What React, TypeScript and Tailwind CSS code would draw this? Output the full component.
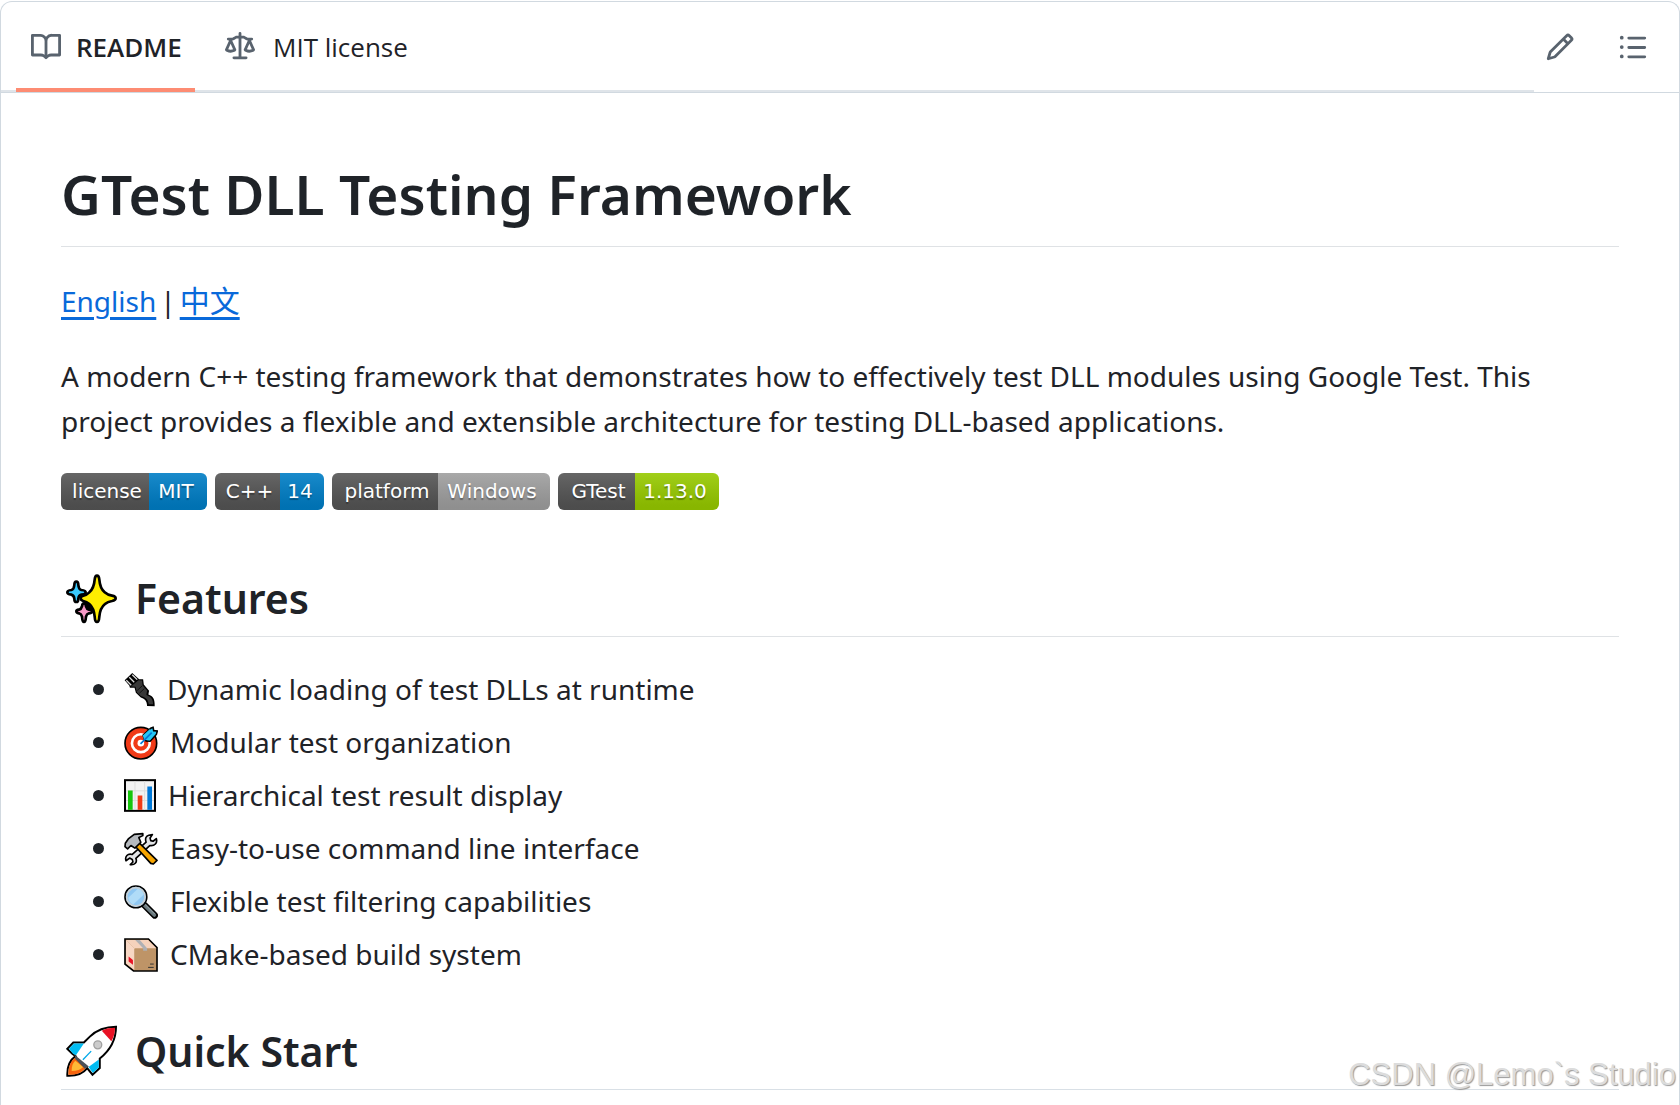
import React from "react";

const icons = {
  book: "M0 1.75A.75.75 0 0 1 .75 1h4.253c1.227 0 2.317.59 3 1.501A3.743 3.743 0 0 1 11.006 1h4.245a.75.75 0 0 1 .75.75v10.5a.75.75 0 0 1-.75.75h-4.507a2.25 2.25 0 0 0-1.591.659l-.622.621a.75.75 0 0 1-1.06 0l-.622-.621A2.25 2.25 0 0 0 5.258 13H.75a.75.75 0 0 1-.75-.75Zm7.251 10.324.004-5.073-.002-2.253A2.25 2.25 0 0 0 5.003 2.5H1.5v9h3.757a3.75 3.75 0 0 1 1.994.574ZM8.755 4.75l-.004 7.322a3.752 3.752 0 0 1 1.992-.572H14.5v-9h-3.495a2.25 2.25 0 0 0-2.25 2.25Z",
  law: "M8.75.75V2h.985c.304 0 .603.08.867.231l1.29.736c.038.022.08.033.124.033h2.234a.75.75 0 0 1 0 1.5h-.427l2.111 4.692a.75.75 0 0 1-.154.838l-.53-.53.529.531-.001.002-.002.002-.006.006-.006.005-.01.01-.045.04c-.21.176-.441.327-.686.45C14.556 10.78 13.88 11 13 11a4.498 4.498 0 0 1-2.023-.454 3.544 3.544 0 0 1-.686-.45l-.045-.04-.016-.015-.006-.006-.004-.004v-.001a.75.75 0 0 1-.154-.838L12.178 4.5h-.162c-.305 0-.604-.079-.868-.231l-1.29-.736a.245.245 0 0 0-.124-.033H8.75V13h2.5a.75.75 0 0 1 0 1.5h-6.5a.75.75 0 0 1 0-1.5h2.5V3.5h-.984a.245.245 0 0 0-.124.033l-1.289.737c-.265.15-.564.23-.869.23h-.162l2.112 4.692a.75.75 0 0 1-.154.838l-.53-.53.529.531-.001.002-.002.002-.006.006-.016.015-.045.04c-.21.176-.441.327-.686.45C4.556 10.78 3.88 11 3 11a4.498 4.498 0 0 1-2.023-.454 3.544 3.544 0 0 1-.686-.45l-.045-.04-.016-.015-.006-.006-.004-.004v-.001a.75.75 0 0 1-.154-.838L2.178 4.5H1.75a.75.75 0 0 1 0-1.5h2.234a.249.249 0 0 0 .125-.033l1.288-.737c.265-.15.564-.23.869-.23h.984V.75a.75.75 0 0 1 1.5 0Zm2.945 8.477c.285.135.718.273 1.305.273s1.02-.138 1.305-.273L13 6.327Zm-10 0c.285.135.718.273 1.305.273s1.02-.138 1.305-.273L3 6.327Z",
  pencil: "M11.013 1.427a1.75 1.75 0 0 1 2.474 0l1.086 1.086a1.75 1.75 0 0 1 0 2.474l-8.61 8.61c-.21.21-.47.364-.756.445l-3.251.93a.75.75 0 0 1-.927-.928l.929-3.25c.081-.286.235-.547.445-.758l8.61-8.61Zm.176 4.823L9.75 4.81l-6.286 6.287a.253.253 0 0 0-.064.108l-.558 1.953 1.953-.558a.253.253 0 0 0 .108-.064Zm1.238-3.763a.25.25 0 0 0-.354 0L10.811 3.75l1.439 1.44 1.263-1.263a.25.25 0 0 0 0-.354Z",
  list: "M5.75 2.5h8.5a.75.75 0 0 1 0 1.5h-8.5a.75.75 0 0 1 0-1.5Zm0 5h8.5a.75.75 0 0 1 0 1.5h-8.5a.75.75 0 0 1 0-1.5Zm0 5h8.5a.75.75 0 0 1 0 1.5h-8.5a.75.75 0 0 1 0-1.5ZM2 14a1 1 0 1 1 0-2 1 1 0 0 1 0 2Zm1-6a1 1 0 1 1-2 0 1 1 0 0 1 2 0ZM2 4a1 1 0 1 1 0-2 1 1 0 0 1 0 2Z",
};

const Icon = ({ name }: { name: keyof typeof icons }) => (
  <svg viewBox="0 0 16 16" className="size-[30px] fill-[#59636e]" aria-hidden="true">
    <path d={icons[name]} />
  </svg>
);

const Sparkles = () => (
  <svg viewBox="48 37 153 150" className="mb-0.5 w-[51px] h-[50px]" strokeLinejoin="round" stroke="#000" strokeWidth="8" aria-hidden="true">
    <path fill="#000" d="M104 118L128 118L132 152L112 144Z" />
    <path fill="#f999c8" d="M102 125q5 0 6 9q2 8 9 10q10 1 10 5q0 5-10 6q-7 2-9 10q-1 16-6 16q-5 0-6-16q-2-8-9-10q-8-1-8-6q0-4 8-5q7-2 9-10q1-9 6-9z" />
    <path fill="#3acbff" d="M79 60q6 0 6 10q1 13 9 15q13 1 13 7q0 6-13 7q-8 2-9 12q0 10-6 10q-6 0-6-10q-1-10-9-12q-12-1-12-7q0-6 12-7q8-2 9-15q0-10 6-10z" />
    <path fill="#ffed00" d="M141 42q6 0 7 12q2 26 16 38q9 8 22 10q11 2 11 8q0 6-11 8q-13 2-21 9q-15 12-17 38q-1 16-7 16q-6 0-7-16q-2-26-16-38q-8-7-18-9q-8-2-8-8q0-6 8-8q10-2 18-10q14-12 16-38q1-12 7-12z" />
  </svg>
);

const Plug = () => (
  <svg viewBox="132 36 94 104" className="w-[31px] h-[35px]" aria-hidden="true">
    <path d="M134 60L157 38L178 57L190 57L192 73L208 92L206 103C220 108 226 117 225 139L202 138C202 121 193 115 183 112L168 98L164 83L150 83L148 76Z" fill="#000" />
    <path d="M139 60L154 75M148 51L163 66M157 43L172 58" stroke="#ddd" strokeWidth="4" />
    <path d="M153 79L176 60L187 61L188 75L202 91L200 105C215 111 220 118 220 133L207 133C205 117 195 111 183 108L171 96L167 80Z" fill="#383838" />
    <path d="M172 91L187 77M179 99L194 85" stroke="#111" strokeWidth="3" />
  </svg>
);

const Target = () => (
  <svg viewBox="132 195 103 103" className="w-[34px] h-[34px]" aria-hidden="true">
    <circle cx="183" cy="247" r="48" fill="#f03a17" stroke="#000" strokeWidth="5" />
    <circle cx="183" cy="247" r="27" fill="none" stroke="#fff" strokeWidth="8" />
    <circle cx="183" cy="247" r="10" fill="#fff" />
    <path d="M194 235L190 223L213 202L220 199L222 209L233 210L230 220L211 241L199 240Z" fill="#26c6f5" stroke="#000" strokeWidth="5" />
    <path d="M193 237L189 224L211 204L217 214L229 218L210 239Z" fill="#26c6f5" />
    <path d="M182 249L216 215" stroke="#0078d7" strokeWidth="5" />
  </svg>
);

const BarChart = () => (
  <svg viewBox="132 353 96 98" className="w-8 h-[33px]" aria-hidden="true">
    <rect x="135" y="356" width="90" height="92" fill="#f2f2f2" stroke="#000" strokeWidth="6" />
    <path d="M138 388H222M138 417H222M165 359V445M194 359V445" stroke="#ddd" strokeWidth="3" />
    <path d="M151 387V445" stroke="#16c60c" strokeWidth="14" />
    <path d="M180 402V445" stroke="#f03a17" strokeWidth="14" />
    <path d="M209 375V445" stroke="#0078d7" strokeWidth="14" />
  </svg>
);

const Tools = () => (
  <svg viewBox="132 43 103 103" className="w-[34px] h-[34px]" strokeLinejoin="round" aria-hidden="true">
    <path d="M207 53L218 51L211 61L213 69L220 71L230 63C234 77 225 86 210 84L168 123C173 135 164 144 151 142L159 134L157 126L149 122L138 130C134 117 143 107 157 111L199 74C195 62 199 55 207 53Z" fill="#e3e5e8" stroke="#000" strokeWidth="5" />
    <path d="M166 86L178 76L232 129L221 140L213 138Z" fill="#f7a500" stroke="#000" strokeWidth="5" />
    <path d="M136 77L145 64L163 50L189 48L189 54L177 60L183 74L165 92L153 84L143 94L135 87Z" fill="#b5b9be" stroke="#000" strokeWidth="5" />
  </svg>
);

const Magnifier = () => (
  <svg viewBox="132 201 103 103" className="w-[34px] h-[34px]" aria-hidden="true">
    <path d="M194 262L225 293" stroke="#000" strokeWidth="20" strokeLinecap="round" />
    <path d="M194 262L224 292" stroke="#69797e" strokeWidth="11" strokeLinecap="round" />
    <path d="M196 260L225 289" stroke="#9aa6aa" strokeWidth="3" />
    <circle cx="168" cy="237" r="33" fill="#83beec" stroke="#000" strokeWidth="5" />
    <circle cx="168" cy="237" r="28" fill="#8fc7f2" stroke="#c8d0d5" strokeWidth="5" />
    <path d="M145 240L174 212C184 215 190 221 192 230L160 260C152 257 147 251 145 240Z" fill="#b0dcf8" />
  </svg>
);

const Box = () => (
  <svg viewBox="132 360 103 103" className="w-[34px] h-[34px]" aria-hidden="true">
    <path d="M135 363H206L232 389V460H161L135 439Z" fill="#be9467" stroke="#000" strokeWidth="5" />
    <path d="M138 366H205L230 391H163Z" fill="#f5d2bc" />
    <path d="M138 366L163 391V457L138 437Z" fill="#f7d7c4" />
    <path d="M166 366H180L202 391V399H190V391Z" fill="#aeb0b4" />
    <path d="M146 416L159 427V441L146 431Z" fill="#e81224" />
    <path d="M211 439H222M205 449H222" stroke="#333" strokeWidth="3" />
  </svg>
);

const Rocket = () => (
  <svg viewBox="47 43 154 155" className="mb-0.5 w-[51px] h-[52px]" aria-hidden="true">
    <path d="M198 47C172 47 140 56 119 77L101 95L69 95L51 114L66 129L76 136C57 149 50 170 51 195C77 196 99 188 111 172L127 192L149 172L149 143C179 119 198 89 198 47Z" fill="#fff" stroke="#000" strokeWidth="6" />
    <path d="M101 98L71 98L56 114L68 129L77 133Z" fill="#00bcf2" />
    <path d="M146 146L115 169L128 187L146 170Z" fill="#00bcf2" />
    <path d="M76 139C60 151 54 168 54 192C79 192 96 186 108 170Z" fill="#f7630c" />
    <path d="M75 150C67 157 64 166 64 181C80 181 91 177 99 169Z" fill="#ffb936" />
    <path d="M73 132L82 139L116 167L104 174L75 145Z" fill="#4b5056" />
    <path d="M195 50C181 50 168 52 155 59L184 91C191 79 195 66 195 50Z" fill="#e81224" />
    <circle cx="143" cy="102" r="12" fill="#ccc" stroke="#a0a0a0" strokeWidth="4" />
    <path d="M98 147L123 121" stroke="#00a8e8" strokeWidth="4" />
  </svg>
);

const badges = [
  { label: "license", value: "MIT", left: "w-[88px]", right: "w-[58px]", color: "bg-[#007ec6]" },
  { label: "C++", value: "14", left: "w-[65px]", right: "w-11", color: "bg-[#007ec6]" },
  { label: "platform", value: "Windows", left: "w-[106px]", right: "w-[112px]", color: "bg-[#9f9f9f]" },
  { label: "GTest", value: "1.13.0", left: "w-[77px]", right: "w-[84px]", color: "bg-[#97ca00]" },
];

const features = [
  { icon: <Plug />, text: "Dynamic loading of test DLLs at runtime" },
  { icon: <Target />, text: "Modular test organization" },
  { icon: <BarChart />, text: "Hierarchical test result display" },
  { icon: <Tools />, text: "Easy-to-use command line interface" },
  { icon: <Magnifier />, text: "Flexible test filtering capabilities" },
  { icon: <Box />, text: "CMake-based build system" },
];

const Header = () => {
  return (
    <header className="flex h-[91px] border-b border-[#d1d9e0]">
      <nav className="flex flex-1 border-b-2 border-[#dfe4e9] pl-[15px]">
        <a href="#readme" className="-mb-0.5 flex w-[179px] items-center gap-[15px] border-b-4 border-[#fd8c73] pt-1 pl-[15px] font-['Open_Sans',sans-serif] text-[26px] font-semibold">
          <Icon name="book" />
          README
        </a>
        <a href="#license" className="ml-[30px] flex items-center gap-[18px] pt-0.5 font-['Open_Sans',sans-serif] text-[26px]">
          <Icon name="law" />
          MIT license
        </a>
      </nav>
      <div className="flex w-[145px] items-center justify-between pl-[11px] pr-[31px]">
        <button type="button" aria-label="Edit file">
          <Icon name="pencil" />
        </button>
        <button type="button" aria-label="Outline">
          <Icon name="list" />
        </button>
      </div>
    </header>
  );
};

const App = () => {
  return (
    <div className="relative flex h-screen flex-col overflow-hidden bg-white pt-px font-['Noto_Sans','Noto_Sans_CJK_SC',sans-serif] text-[#1f2328]">
      <div className="flex-1 rounded-t-xl border-x border-t border-[#d1d9e0]">
        <Header />
        <article className="px-[60px] pt-[63px] text-[28px] leading-[45px]">
          <h1 className="mb-[31px] border-b border-[#dfe2e5] pb-[15px] text-[55px] leading-[75px] font-semibold">
            GTest DLL Testing Framework
          </h1>
          <p className="mb-[30px] flex items-baseline gap-1">
            <a href="#english" className="text-[#0969da] underline decoration-[3px] underline-offset-[5px]">English</a>
            <span>|</span>
            <a href="#chinese" className="text-[30px] text-[#0969da] underline decoration-[3px] underline-offset-[5px]">中文</a>
          </p>
          <p>
            A modern C++ testing framework that demonstrates how to effectively test DLL modules using Google Test. This
            project provides a flexible and extensible architecture for testing DLL-based applications.
          </p>
          <div className="mt-[29px] flex flex-wrap gap-2 font-['DejaVu_Sans',sans-serif] text-[20px] leading-[37px] text-white">
            {badges.map((badge) => (
              <a key={badge.label} href="#badge" className="flex overflow-hidden rounded-md text-center [text-shadow:0_2px_1px_rgb(1_1_1/0.3)]">
                <span className={`bg-[#555] bg-linear-to-b from-white/10 to-black/10 pl-1 ${badge.left}`}>{badge.label}</span>
                <span className={`bg-linear-to-b from-white/10 to-black/10 pr-1 ${badge.right} ${badge.color}`}>{badge.value}</span>
              </a>
            ))}
          </div>
          <h2 className="mt-[60px] flex items-end gap-[18px] border-b border-[#dfe2e5] pb-2.5 pl-[5px] text-[41px] leading-[56px] font-semibold">
            <Sparkles />
            Features
          </h2>
          <ul className="mt-[30px] flex flex-col gap-2 pl-8">
            {features.map((feature) => (
              <li key={feature.text} className="flex items-center">
                <span className="mr-5 size-[11px] rounded-full bg-[#1f2328]" />
                <span className="flex items-center gap-3">
                  {feature.icon}
                  {feature.text}
                </span>
              </li>
            ))}
          </ul>
          <h2 className="mt-[46px] flex items-end gap-[18px] border-b border-[#d9e0e6] pb-2.5 pl-[5px] text-[41px] leading-[56px] font-semibold">
            <Rocket />
            Quick Start
          </h2>
        </article>
      </div>
      <span className="absolute right-1 bottom-3 font-['Liberation_Sans',sans-serif] text-[31px] leading-9 text-[#dcdcdc] [text-shadow:1px_1px_1px_#999]">
        CSDN @Lemo`s Studio
      </span>
    </div>
  );
};

export default App;
